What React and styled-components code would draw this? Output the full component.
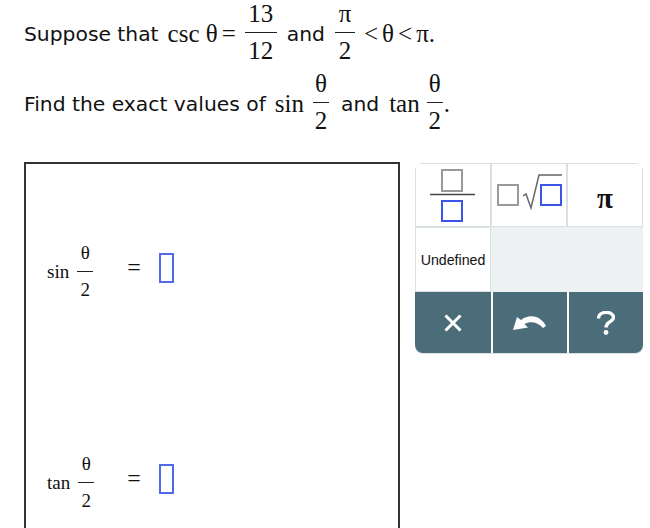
import React from 'react'
import styled, { createGlobalStyle } from 'styled-components'

const GlobalStyle = createGlobalStyle`
  html, body {
    margin: 0;
    height: 100%;
    overflow: hidden;
    background: #fff;
  }
`

const Page = styled.div`
  width: 650px;
  height: 528px;
  overflow: hidden;
  padding: 0 7px 0 24px;
  box-sizing: border-box;
  color: #111;
`

const QuestionLine = styled.div`
  display: flex;
  align-items: center;
  height: 68px;
  margin-bottom: 2px;
  font-family: "DejaVu Sans", Verdana, sans-serif;
  font-size: 20.3px;
  white-space: pre;
`

const Math = styled.span`
  font-family: "Liberation Serif", "Times New Roman", serif;
  font-size: 25px;
  margin: 0 ${p => p.$right || 0}px 0 ${p => p.$left || 0}px;
  color: #111;
`

const Rel = styled.span`
  margin: 0 4px;
`

const Frac = styled.span`
  display: inline-flex;
  flex-direction: column;
  align-items: center;
  font-family: "Liberation Serif", "Times New Roman", serif;
  font-size: ${p => p.$size || 25}px;
  line-height: ${p => p.$lineHeight || 30}px;
  margin: 0 ${p => p.$right || 0}px ${p => p.$lift || 0}px ${p => p.$left || 0}px;
`

const FracBar = styled.span`
  align-self: stretch;
  height: 1px;
  min-width: ${p => p.$width}px;
  background: #222;
  margin: ${p => p.$gap || 3}px 0;
`

const Workspace = styled.div`
  display: flex;
  align-items: flex-start;
  gap: 15px;
  margin-top: 24px;
`

const AnswerBox = styled.div`
  width: 376px;
  height: 400px;
  box-sizing: border-box;
  border: 2px solid #333;
  padding-top: 77px;
  display: flex;
  flex-direction: column;
  gap: 151px;
`

const AnswerRow = styled.div`
  display: grid;
  grid-template-columns: 76px 22px 1fr;
  align-items: center;
  padding-left: 21px;
  height: 60px;
`

const AnswerLabel = styled.div`
  display: flex;
  align-items: center;
  font-family: "Liberation Serif", "Times New Roman", serif;
  font-size: 19px;
`

const Equals = styled.div`
  font-family: "Liberation Serif", "Times New Roman", serif;
  font-size: 24px;
  text-align: center;
  margin-top: -9px;
`

const InputBox = styled.div`
  width: 15px;
  height: 30px;
  border: 2px solid #5169ec;
  box-sizing: border-box;
  margin-left: 14px;
  margin-top: -8px;
`

const Palette = styled.div`
  width: 228px;
  margin-top: 1px;
  display: grid;
  grid-template-columns: 76px 76px 76px;
  grid-template-rows: 64px 65px 61px;
  background: #eef1f2;
  border-radius: 8px;
  box-shadow: 0 1px 0 #d9e0e2;
  overflow: hidden;
`

const PaletteCell = styled.div`
  display: flex;
  align-items: center;
  justify-content: center;
  box-sizing: border-box;
  background: #fff;
  border: 1px solid #d9e0e2;
  font-family: "Liberation Sans", Arial, sans-serif;
  font-size: 14.2px;
  color: #111;
`

const ActionCell = styled(PaletteCell)`
  background: #4b6d79;
  border: none;
  border-left: ${p => (p.$first ? 'none' : '2px solid #fff')};
  color: #fff;
`

const EmptyCell = styled.div`
  grid-column: span 2;
  background: #eef1f2;
`

const PiGlyph = styled.span`
  font-family: "Liberation Serif", "Times New Roman", serif;
  font-weight: bold;
  font-size: 29px;
  margin-top: 6px;
`

function Fraction ({ top, bottom, width, ...rest }) {
  return (
    <Frac {...rest}>
      <span>{top}</span>
      <FracBar $width={width} $gap={rest.$barGap} />
      <span>{bottom}</span>
    </Frac>
  )
}

const FractionIcon = () => (
  <svg width="50" height="56" viewBox="0 0 50 56">
    <rect x="14" y="3" width="20" height="21" fill="none" stroke="#999" strokeWidth="2" />
    <line x1="2" y1="27.5" x2="47" y2="27.5" stroke="#444" strokeWidth="1.3" />
    <rect x="14" y="34" width="20" height="20" fill="none" stroke="#3b55e6" strokeWidth="2" />
  </svg>
)

const RootIcon = () => (
  <svg width="70" height="42" viewBox="0 0 70 42">
    <rect x="4" y="11" width="20" height="20" fill="none" stroke="#999" strokeWidth="2" />
    <path d="M29 22 L32 20 L37 34 L45 1 L68 1" fill="none" stroke="#666" strokeWidth="1.5" />
    <rect x="47" y="11" width="20" height="20" fill="none" stroke="#3b55e6" strokeWidth="2" />
  </svg>
)

const CloseIcon = () => (
  <svg width="18" height="18" viewBox="0 0 18 18">
    <path d="M1.5 1.5 L16.5 16.5 M16.5 1.5 L1.5 16.5" stroke="#fff" strokeWidth="3" />
  </svg>
)

const UndoIcon = () => (
  <svg width="34" height="16" viewBox="0 0 34 16">
    <path d="M0 15 L4 2 L8 5 C16 -1 27 0 33 11 L30 13 C25 7 17 6 11.5 9 L15 12.5 Z" fill="#fff" />
  </svg>
)

const HelpIcon = () => (
  <svg width="18" height="24" viewBox="0 0 18 24">
    <path d="M1.5 7.5 C1.5 -0.5 16.5 -0.5 16.5 6.5 C16.5 11 9 10.5 9 16.5" fill="none" stroke="#fff" strokeWidth="3.4" />
    <circle cx="9" cy="21.5" r="2.4" fill="#fff" />
  </svg>
)

export default function App () {
  return (
    <Page>
      <GlobalStyle />
      <QuestionLine>
        Suppose that
        <Math $left={9}>csc θ<Rel>=</Rel></Math>
        <Fraction top="13" bottom="12" width={32} $left={5} $right={10} $lift={4} />
        and
        <Fraction top="π" bottom="2" width={20} $left={10} $right={5} $lift={4} />
        <Math><Rel>{'<'}</Rel>θ<Rel>{'<'}</Rel>π.</Math>
      </QuestionLine>
      <QuestionLine>
        Find the exact values of
        <Math $left={9}>sin</Math>
        <Fraction top="θ" bottom="2" width={16} $left={9} $right={12} $lift={4} />
        and
        <Math $left={10}>tan</Math>
        <Fraction top="θ" bottom="2" width={16} $left={7} $lift={4} />
        <Math $left={1}>.</Math>
      </QuestionLine>
      <Workspace>
        <AnswerBox>
          {['sin', 'tan'].map(fn => (
            <AnswerRow key={fn}>
              <AnswerLabel>
                {fn}
                <Fraction top="θ" bottom="2" width={16} $size={19} $lineHeight={24} $barGap={6} $left={8} />
              </AnswerLabel>
              <Equals>=</Equals>
              <InputBox />
            </AnswerRow>
          ))}
        </AnswerBox>
        <Palette>
          <PaletteCell><FractionIcon /></PaletteCell>
          <PaletteCell><RootIcon /></PaletteCell>
          <PaletteCell><PiGlyph>π</PiGlyph></PaletteCell>
          <PaletteCell>Undefined</PaletteCell>
          <EmptyCell />
          <ActionCell $first><CloseIcon /></ActionCell>
          <ActionCell><UndoIcon /></ActionCell>
          <ActionCell><HelpIcon /></ActionCell>
        </Palette>
      </Workspace>
    </Page>
  )
}
